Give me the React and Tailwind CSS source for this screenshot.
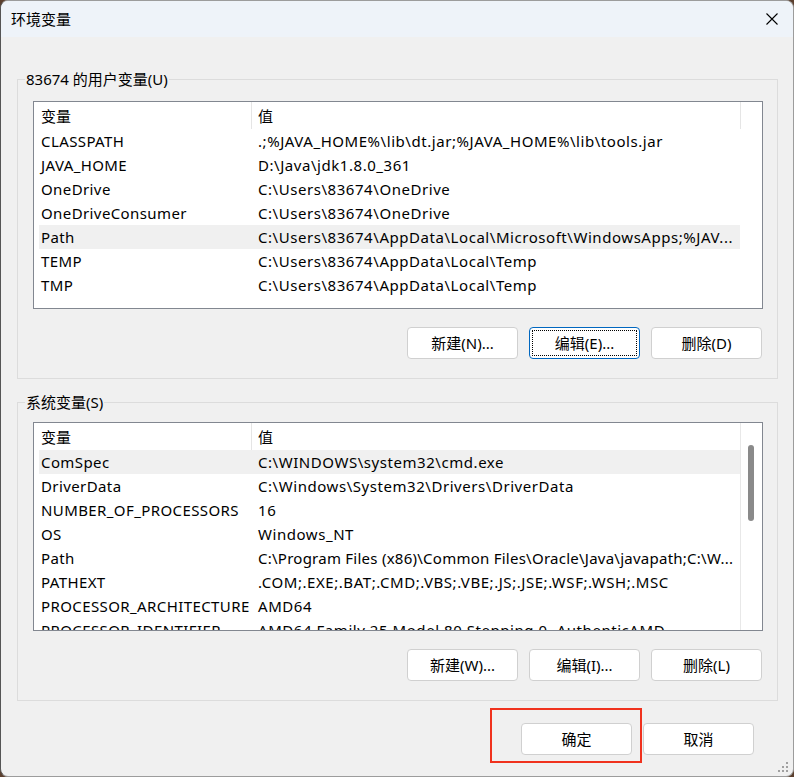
import React from "react";

const FONT = { fontFamily: '"Noto Sans", "Noto Sans CJK SC", sans-serif' };

const userVars = [
  ["CLASSPATH", ".;%JAVA_HOME%\\lib\\dt.jar;%JAVA_HOME%\\lib\\tools.jar"],
  ["JAVA_HOME", "D:\\Java\\jdk1.8.0_361"],
  ["OneDrive", "C:\\Users\\83674\\OneDrive"],
  ["OneDriveConsumer", "C:\\Users\\83674\\OneDrive"],
  ["Path", "C:\\Users\\83674\\AppData\\Local\\Microsoft\\WindowsApps;%JAV..."],
  ["TEMP", "C:\\Users\\83674\\AppData\\Local\\Temp"],
  ["TMP", "C:\\Users\\83674\\AppData\\Local\\Temp"],
];

const sysVars = [
  ["ComSpec", "C:\\WINDOWS\\system32\\cmd.exe"],
  ["DriverData", "C:\\Windows\\System32\\Drivers\\DriverData"],
  ["NUMBER_OF_PROCESSORS", "16"],
  ["OS", "Windows_NT"],
  ["Path", "C:\\Program Files (x86)\\Common Files\\Oracle\\Java\\javapath;C:\\W...", true],
  ["PATHEXT", ".COM;.EXE;.BAT;.CMD;.VBS;.VBE;.JS;.JSE;.WSF;.WSH;.MSC"],
  ["PROCESSOR_ARCHITECTURE", "AMD64"],
  ["PROCESSOR_IDENTIFIER", "AMD64 Family 25 Model 80 Stepping 0, AuthenticAMD"],
];

function Btn({ children, focused }) {
  return (
    <div
      className={
        "relative w-[111px] h-[32px] shrink-0 flex items-center justify-center bg-white rounded-[4px] border text-[15px] leading-[20px] text-black " +
        (focused ? "border-[#0067c0]" : "border-[#d0d0d0]")
      }
    >
      {focused && (
        <span className="absolute inset-[2px] border border-dotted border-black rounded-[1px]" />
      )}
      {children}
    </div>
  );
}

function VarList({ rows, selected, scrollbar, height }) {
  return (
    <div
      className="border border-[#828790] bg-white overflow-hidden flex min-w-0"
      style={{ height }}
    >
      <div className="flex-1 pl-[5px] min-w-0 overflow-hidden">
        <div className="flex h-[27px] items-center">
          <div className="w-[213px] shrink-0 h-full flex items-center pl-[2px] border-r border-[#e5e5e5]">
            变量
          </div>
          <div className="flex-1 min-w-0 h-full flex items-center pl-[6px]">值</div>
        </div>
        {rows.map(([k, v, tight], i) => (
          <div
            key={k + i}
            className={
              "flex h-[24px] items-center whitespace-nowrap pb-[1px] " +
              (i === selected ? "bg-[#f0f0f0]" : "")
            }
          >
            <div className="w-[213px] shrink-0 pl-[2px] overflow-hidden tracking-[0.4px]">{k}</div>
            <div
              className={
                "flex-1 min-w-0 pl-[6px] overflow-hidden " +
                (tight ? "tracking-[0.25px]" : "tracking-[0.55px]")
              }
            >
              {v}
            </div>
          </div>
        ))}
      </div>
      {scrollbar ? (
        <div className="w-[22px] shrink-0 border-l border-[#e8e8e8] relative">
          <div className="absolute left-[7px] top-[22px] w-[6px] h-[76px] rounded-[3px] bg-[#8a8a8a]" />
        </div>
      ) : (
        <div className="w-[22px] shrink-0">
          <div className="h-[27px] w-px bg-[#e5e5e5]" />
        </div>
      )}
    </div>
  );
}

function Group({ title, children, listTop }) {
  return (
    <fieldset className="border border-[#dcdcdc] rounded-none m-0 p-0 min-w-0">
      <legend className="ml-[7px] px-[1px] text-[15px] leading-[20px]">{title}</legend>
      <div className="pl-[15px] pr-[14px] min-w-0" style={{ paddingTop: listTop }}>
        {children}
      </div>
    </fieldset>
  );
}

export default function App() {
  return (
    <div className="w-[794px] h-[777px] bg-[#5b3f2e]" style={FONT}>
      <div className="relative w-[794px] h-[777px] rounded-[8px] border border-[#9c9c9c] border-l-[#555] bg-[#f0f0f0] overflow-hidden flex flex-col text-[15px] leading-[20px] text-black">
        {/* Title bar */}
        <div className="h-[36px] bg-[#eef3f9] flex items-center justify-between pl-[10px] pr-[15px] shrink-0">
          <span className="text-[15px] leading-[20px]">环境变量</span>
          <svg width="12" height="12" viewBox="0 0 12 12" className="text-black">
            <path d="M0.5 0.5 L11.5 11.5 M11.5 0.5 L0.5 11.5" stroke="currentColor" strokeWidth="1.1" />
          </svg>
        </div>

        {/* Body */}
        <div className="flex flex-col pl-[16px] pr-[15px] pt-[32px] min-w-0">
          <Group title="83674 的用户变量(U)" listTop={12}>
            <VarList rows={userVars} selected={4} height={208} />
            <div className="flex justify-end gap-[11px] pt-[18px] pb-[19px] pr-[1px]">
              <Btn>新建(N)...</Btn>
              <Btn focused>编辑(E)...</Btn>
              <Btn>删除(D)</Btn>
            </div>
          </Group>

          <div className="h-[13px]" />

          <Group title="系统变量(S)" listTop={10}>
            <VarList rows={sysVars} selected={0} scrollbar height={209} />
            <div className="flex justify-end gap-[11px] pt-[18px] pb-[19px] pr-[1px]">
              <Btn>新建(W)...</Btn>
              <Btn>编辑(I)...</Btn>
              <Btn>删除(L)</Btn>
            </div>
          </Group>

          <div className="flex justify-end gap-[11px] pt-[22px] pr-[24px]">
            <div className="relative">
              <div className="absolute -left-[31px] -top-[15px] w-[152px] h-[55px] border-2 border-[#f0321e] pointer-events-none" />
              <Btn>确定</Btn>
            </div>
            <Btn>取消</Btn>
          </div>
        </div>

        {/* resize grip */}
        <svg className="absolute right-[3px] bottom-[2px]" width="12" height="12" viewBox="0 0 12 12">
          <g fill="#a0a0a0">
            <rect x="8" y="0" width="2" height="2" />
            <rect x="4" y="4" width="2" height="2" />
            <rect x="8" y="4" width="2" height="2" />
            <rect x="0" y="8" width="2" height="2" />
            <rect x="4" y="8" width="2" height="2" />
            <rect x="8" y="8" width="2" height="2" />
          </g>
        </svg>
      </div>
    </div>
  );
}
